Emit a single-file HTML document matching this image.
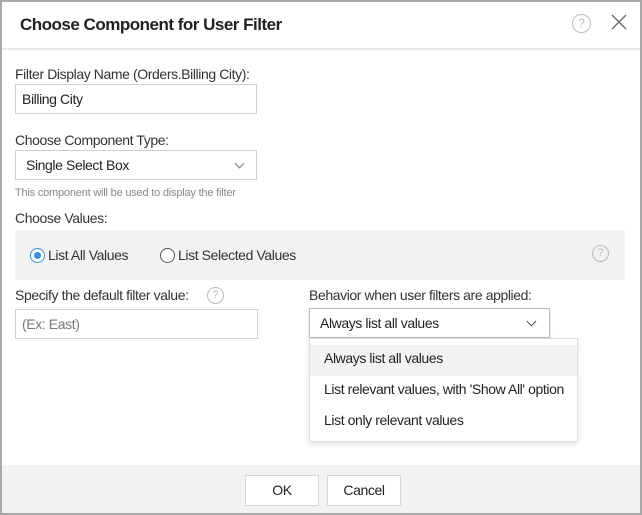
<!DOCTYPE html>
<html><head><meta charset="utf-8"><style>
*{box-sizing:border-box;margin:0;padding:0}
body{width:642px;height:515px;background:#a9a9a9;font-family:"Liberation Sans",sans-serif;color:#222;position:relative;overflow:hidden;letter-spacing:-0.4px}
.dlg{position:absolute;left:2px;top:2px;width:638px;height:511px;background:#fff}
.a{position:absolute;white-space:nowrap}
.lbl{font-size:14px;color:#333}
.box{position:absolute;border:1px solid #d0d0d0;background:#fff;font-size:14px;padding-left:6px;display:flex;align-items:center}
.chev{position:absolute;width:7px;height:7px;border-right:1.3px solid #555;border-bottom:1.3px solid #555;transform:rotate(45deg)}
.q{position:absolute;width:17px;height:17px;border:1.3px solid #bbb;border-radius:50%;color:#bbb;font-size:11px;text-align:center;line-height:15px;letter-spacing:0}
</style></head><body>
<div class="dlg">
<div class="a" style="left:18px;top:13px;font-size:17px;font-weight:bold;color:#222;letter-spacing:-0.5px">Choose Component for User Filter</div>
<div class="q" style="left:570px;top:12px;width:19px;height:19px;line-height:17px;font-size:12px">?</div>
<svg class="a" style="left:609px;top:12px" width="16" height="16"><path d="M1 1L15 15M15 1L1 15" stroke="#666" stroke-width="1.3"/></svg>
<div class="a" style="left:0;top:46px;width:638px;height:2px;background:#e8e8e8"></div>

<div class="a lbl" style="left:13px;top:64px">Filter Display Name (Orders.Billing City):</div>
<div class="box" style="left:13px;top:82px;width:242px;height:30px">Billing City</div>
<div class="a lbl" style="left:13px;top:130px">Choose Component Type:</div>
<div class="box" style="left:13px;top:148px;width:242px;height:30px;padding-left:10px">Single Select Box<div class="chev" style="left:220px;top:9px;border-color:#777"></div></div>
<div class="a" style="left:13px;top:185px;font-size:11px;color:#888;letter-spacing:-0.2px">This component will be used to display the filter</div>
<div class="a lbl" style="left:13px;top:208px">Choose Values:</div>
<div class="a" style="left:13px;top:228px;width:610px;height:50px;background:#f2f2f2"></div>
<div class="a" style="left:28px;top:246px;width:15px;height:15px;border:1.3px solid #3b8de0;border-radius:50%;background:#fff"><div style="position:absolute;left:3px;top:3px;width:7px;height:7px;border-radius:50%;background:#3b8de0"></div></div>
<div class="a lbl" style="left:46px;top:245px">List All Values</div>
<div class="a" style="left:158px;top:246px;width:15px;height:15px;border:1.3px solid #555;border-radius:50%;background:#fff"></div>
<div class="a lbl" style="left:176px;top:245px">List Selected Values</div>
<div class="q" style="left:590px;top:243px">?</div>

<div class="a lbl" style="left:13px;top:285px">Specify the default filter value:</div>
<div class="q" style="left:205px;top:285px">?</div>
<div class="box" style="left:13px;top:307px;width:243px;height:30px;color:#777">(Ex: East)</div>
<div class="a lbl" style="left:307px;top:285px">Behavior when user filters are applied:</div>
<div class="box" style="left:307px;top:306px;width:241px;height:30px;padding-left:10px;border-color:#bbb;box-shadow:0 1px 3px rgba(0,0,0,.15)">Always list all values<div class="chev" style="left:218px;top:9px"></div></div>
<div class="a" style="left:307px;top:336px;width:269px;height:104px;background:#fff;border:1px solid #e0e0e0;box-shadow:0 2px 5px rgba(0,0,0,.12)">
<div style="position:absolute;left:0;top:6px;width:267px;height:31px;background:#f2f2f2"></div>
<div class="a lbl" style="left:14px;top:11px;color:#222">Always list all values</div>
<div class="a lbl" style="left:14px;top:42px;color:#222">List relevant values, with 'Show All' option</div>
<div class="a lbl" style="left:14px;top:73px;color:#222">List only relevant values</div>
</div>

<div class="a" style="left:0;top:463px;width:638px;height:48px;background:#f2f2f2"></div>
<div class="a" style="left:243px;top:473px;width:74px;height:31px;background:#fff;border:1px solid #d5d5d5;font-size:14px;text-align:center;line-height:29px">OK</div>
<div class="a" style="left:325px;top:473px;width:74px;height:31px;background:#fff;border:1px solid #d5d5d5;font-size:14px;text-align:center;line-height:29px">Cancel</div>
</div>
</body></html>
